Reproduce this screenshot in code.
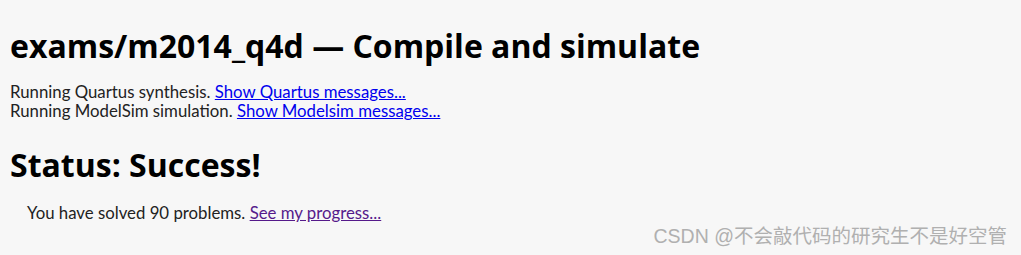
export default function App() {
  return (
    <div
      className="relative w-[1021px] h-[255px] bg-[#f7f7f7] text-[#222] px-[10px] overflow-hidden"
      style={{ fontFamily: '"Lato", "Open Sans", sans-serif' }}
    >
      <h1 className="pt-[24px] text-[32px] font-bold leading-[44px] text-black font-['Open_Sans',sans-serif]">
        exams/m2014_q4d — Compile and simulate
      </h1>
      <div className="mt-[14px] text-[16.8px] leading-[19px]">
        <div>
          Running Quartus synthesis.{' '}
          <a href="#" className="text-[#0000ee] underline">
            Show Quartus messages...
          </a>
        </div>
        <div>
          Running ModelSim simulation.{' '}
          <a href="#" className="text-[#0000ee] underline">
            Show Modelsim messages...
          </a>
        </div>
      </div>
      <h2 className="mt-[23px] text-[32px] font-bold leading-[44px] text-black font-['Open_Sans',sans-serif]">
        Status: Success!
      </h2>
      <p className="mt-[16px] pl-[17px] text-[16.8px] leading-[19px]">
        You have solved 90 problems.{' '}
        <a href="#" className="text-[#551a8b] underline">
          See my progress...
        </a>
      </p>
      <div className="absolute right-[14px] bottom-[8px] text-[19.5px] leading-[22px] text-[#b0b0b0] font-['Liberation_Sans','Noto_Sans_CJK_SC',sans-serif]">
        CSDN @不会敲代码的研究生不是好空管
      </div>
    </div>
  );
}
